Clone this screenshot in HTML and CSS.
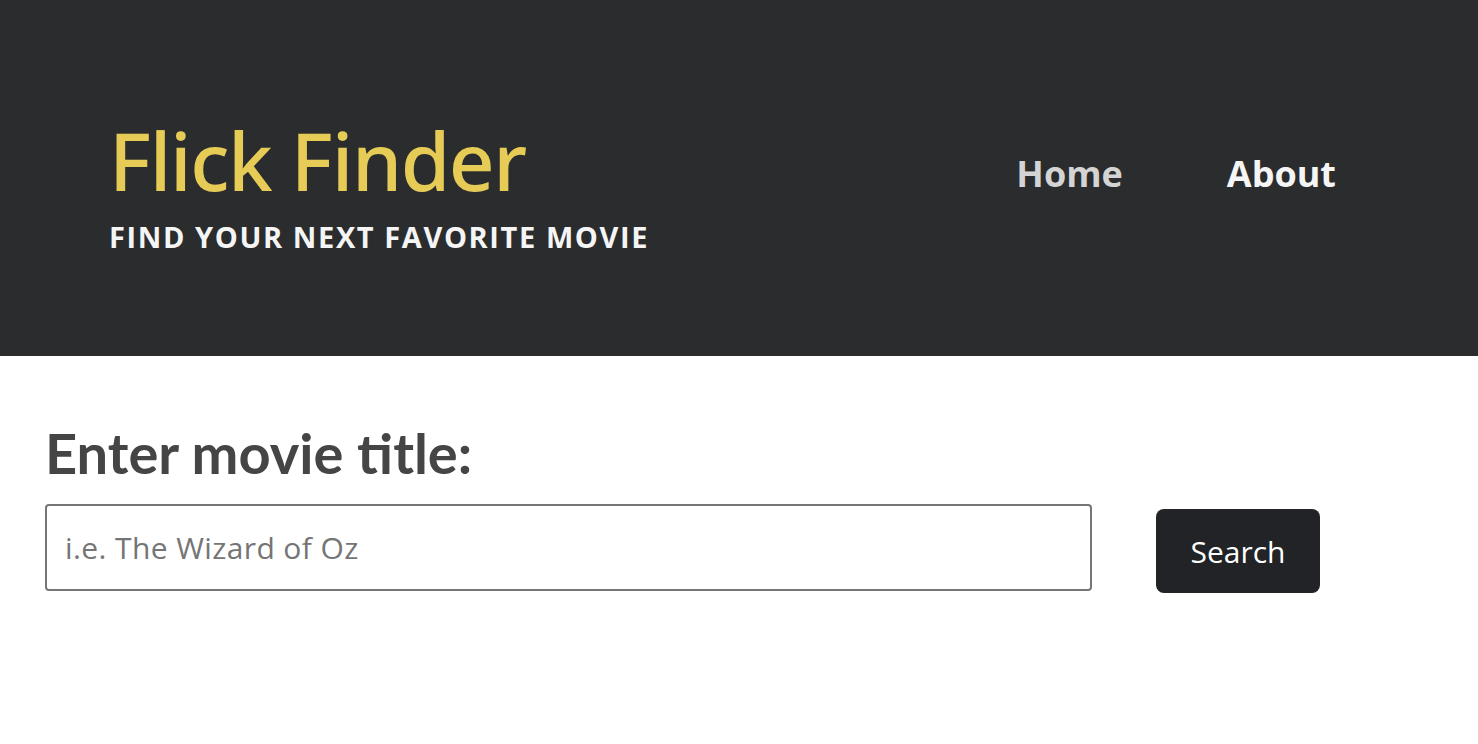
FILE: index.html
```html
<!DOCTYPE html>
<html lang="en">
<head>
  <meta charset="UTF-8" />
  <meta name="viewport" content="width=device-width, initial-scale=1.0" />
  <title>Flick Finder</title>
  <link rel="stylesheet" href="styles.css">
</head>
<body>
  <header class="site-header">
    <div class="brand">
      <h1 class="brand-title">Flick Finder</h1>
      <p class="brand-tagline">Find your next favorite movie</p>
    </div>
    <nav class="nav">
      <a class="nav-link nav-home" href="#">Home</a>
      <a class="nav-link" href="#">About</a>
    </nav>
  </header>

  <main class="search">
    <h2 class="search-label">Enter movie title:</h2>
    <form class="search-form" onsubmit="return false">
      <input class="search-input" type="text" placeholder="i.e. The Wizard of Oz">
      <button class="search-button" type="submit">Search</button>
    </form>
  </main>
</body>
</html>
```

FILE: styles.css
```css
body {
  margin: 0;
  background: #fff;
  font-family: "Open Sans", sans-serif;
}

.site-header {
  height: 356px;
  box-sizing: border-box;
  background: #2b2c2e;
  display: flex;
  align-items: center;
  justify-content: space-between;
  padding: 0 142px 0 109px;
}

.brand {
  margin-top: 14px;
}

.brand-title {
  margin: 0;
  font-family: "Noto Sans", sans-serif;
  font-weight: 500;
  font-size: 80px;
  line-height: 1;
  color: #e6cc56;
  letter-spacing: -1.4px;
}

.brand-tagline {
  margin: 22px 0 0;
  font-weight: 700;
  font-size: 29px;
  line-height: 1;
  letter-spacing: 1.6px;
  text-transform: uppercase;
  color: #f5f5f5;
}

.nav {
  display: flex;
  gap: 104px;
  margin-top: -10px;
}

.nav-link {
  font-weight: 700;
  font-size: 36px;
  color: #f5f5f5;
  text-decoration: none;
}

.nav-home {
  color: #d4d4d4;
}

.search {
  padding: 63px 45px 0;
}

.search-label {
  margin: 0 0 16px;
  font-family: Lato, sans-serif;
  font-weight: 700;
  font-size: 56px;
  color: #454545;
}

.search-form {
  display: flex;
  align-items: center;
  gap: 64px;
}

.search-input {
  width: 1047px;
  height: 87px;
  box-sizing: border-box;
  border: 2px solid #767676;
  border-radius: 4px;
  padding: 0 18px;
  font-family: "Open Sans", sans-serif;
  font-size: 30px;
  letter-spacing: 0.4px;
  color: #333;
}

.search-input::placeholder {
  color: #757575;
}

.search-button {
  width: 164px;
  height: 84px;
  margin-top: 7px;
  border: none;
  border-radius: 8px;
  background: #212327;
  color: #fff;
  font-family: "Open Sans", sans-serif;
  font-size: 30px;
  cursor: pointer;
}
```
